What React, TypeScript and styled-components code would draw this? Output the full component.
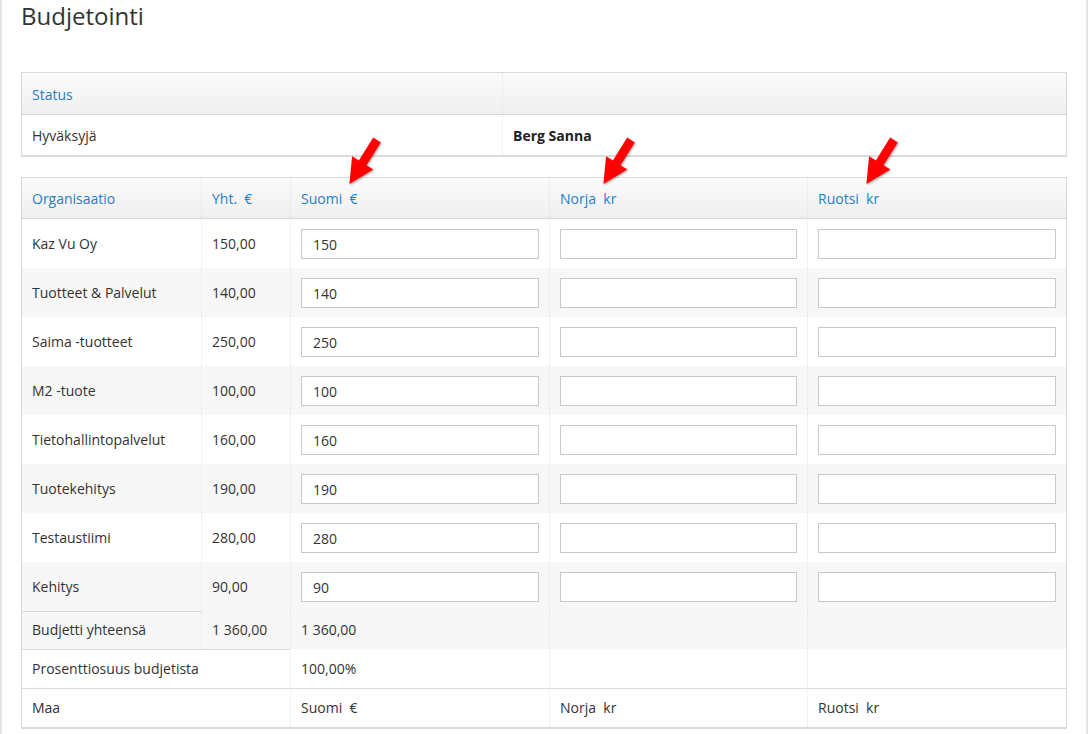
import * as React from "react";
import styled, { createGlobalStyle } from "styled-components";

const GlobalStyle = createGlobalStyle`
  html, body {
    margin: 0;
    padding: 0;
    background: #ffffff;
  }
  body {
    font-family: "Open Sans", "Liberation Sans", sans-serif;
    font-size: 14px;
    color: #333333;
  }
`;

const Panel = styled.div`
  box-sizing: border-box;
  width: 1088px;
  min-height: 734px;
  border-left: 2px solid #e4e4e4;
  border-right: 2px solid #e4e4e4;
  padding: 3px 19px 0 19px;
  position: relative;
`;

const Title = styled.h1`
  margin: 0 0 43px 0;
  font-size: 24px;
  line-height: 26px;
  font-weight: 400;
  color: #333333;
`;

const Table = styled.table`
  width: 1046px;
  table-layout: fixed;
  border-collapse: separate;
  border-spacing: 0;
  border: 1px solid #dadada;
  border-bottom: 2px solid #dcdcdc;
  margin-bottom: 20px;
`;

const HeadCell = styled.th<{ $first?: boolean; $pad?: string }>`
  text-align: left;
  font-weight: 400;
  color: #1f80c4;
  padding: ${(p) => p.$pad ?? "11px 10px 9px"};
  line-height: 20px;
  background: linear-gradient(#fbfbfb, #efefef);
  border-bottom: 1px solid #d6d6d6;
  border-left: ${(p) => (p.$first ? "none" : "1px dotted #e2e2e2")};
  white-space: nowrap;
`;

const Row = styled.tr<{ $shade?: boolean }>`
  background: ${(p) => (p.$shade ? "#f7f7f7" : "#ffffff")};
`;

const Cell = styled.td<{ $first?: boolean; $pad?: string; $rule?: boolean; $bold?: boolean }>`
  padding: ${(p) => p.$pad ?? "9px 10px"};
  line-height: 20px;
  vertical-align: middle;
  border-left: ${(p) => (p.$first ? "none" : "1px dotted #e4e4e4")};
  border-top: ${(p) => (p.$rule ? "1px solid #d9d9d9" : "none")};
  font-weight: ${(p) => (p.$bold ? 700 : 400)};
  color: ${(p) => (p.$bold ? "#222222" : "#333333")};
  white-space: nowrap;
`;

const AmountInput = styled.input`
  box-sizing: border-box;
  display: block;
  width: 100%;
  height: 30px;
  margin: 0;
  padding: 0 11px;
  border: 1px solid #c8c8c8;
  border-radius: 0;
  background: #ffffff;
  font-family: "Open Sans", "Liberation Sans", sans-serif;
  font-size: 14px;
  color: #333333;
  outline: none;
`;

const Arrow = styled.svg<{ $left: number }>`
  position: absolute;
  top: 138px;
  left: ${(p) => p.$left}px;
  width: 50px;
  height: 55px;
  overflow: visible;
  filter: drop-shadow(1px 1px 1px rgba(0, 0, 0, 0.35));
`;

const RedArrow: React.FC<{ left: number }> = ({ left }) => (
  <Arrow $left={left} viewBox="0 0 50 55">
    <g transform="translate(42 2) rotate(122)">
      <path d="M0 -4.5 L27 -4.5 L27 -12.5 L52 0 L27 12.5 L27 4.5 L0 4.5 Z" fill="#ff0000" />
    </g>
  </Arrow>
);

const rows: [string, string, string][] = [
  ["Kaz Vu Oy", "150,00", "150"],
  ["Tuotteet & Palvelut", "140,00", "140"],
  ["Saima -tuotteet", "250,00", "250"],
  ["M2 -tuote", "100,00", "100"],
  ["Tietohallintopalvelut", "160,00", "160"],
  ["Tuotekehitys", "190,00", "190"],
  ["Testaustiimi", "280,00", "280"],
  ["Kehitys", "90,00", "90"],
];

const TALL = "10px 10px 9px 10px";
const STATUS_HEAD = "12px 10px 9px";
const STATUS_ROW = "11px 10px 9px";
const SUM_ROW = "8px 10px 9px";

export default function App() {
  return (
    <>
      <GlobalStyle />
      <Panel>
        <Title>Budjetointi</Title>

        <Table>
          <colgroup>
            <col style={{ width: 480 }} />
            <col />
          </colgroup>
          <thead>
            <tr>
              <HeadCell $first $pad={STATUS_HEAD}>Status</HeadCell>
              <HeadCell $pad={STATUS_HEAD} />
            </tr>
          </thead>
          <tbody>
            <Row>
              <Cell $first $pad={STATUS_ROW}>Hyväksyjä</Cell>
              <Cell $pad={STATUS_ROW} $bold>Berg Sanna</Cell>
            </Row>
          </tbody>
        </Table>

        <Table>
          <colgroup>
            <col style={{ width: 179 }} />
            <col style={{ width: 89 }} />
            <col style={{ width: 259 }} />
            <col style={{ width: 258 }} />
            <col />
          </colgroup>
          <thead>
            <tr>
              <HeadCell $first>Organisaatio</HeadCell>
              <HeadCell>Yht.&nbsp; €</HeadCell>
              <HeadCell>Suomi&nbsp; €</HeadCell>
              <HeadCell>Norja&nbsp; kr</HeadCell>
              <HeadCell>Ruotsi&nbsp; kr</HeadCell>
            </tr>
          </thead>
          <tbody>
            {rows.map(([name, total, fi], i) => (
              <Row key={name} $shade={i % 2 === 1}>
                <Cell $first $pad={TALL}>{name}</Cell>
                <Cell $pad={TALL}>{total}</Cell>
                <Cell $pad={TALL}>
                  <AmountInput defaultValue={fi} />
                </Cell>
                <Cell $pad={TALL}>
                  <AmountInput defaultValue="" />
                </Cell>
                <Cell $pad={TALL}>
                  <AmountInput defaultValue="" />
                </Cell>
              </Row>
            ))}
            <Row $shade>
              <Cell $first $rule $pad={SUM_ROW}>Budjetti yhteensä</Cell>
              <Cell $pad={SUM_ROW}>1 360,00</Cell>
              <Cell $pad={SUM_ROW}>1 360,00</Cell>
              <Cell />
              <Cell />
            </Row>
            <Row>
              <Cell $first colSpan={2} $rule>Prosenttiosuus budjetista</Cell>
              <Cell>100,00%</Cell>
              <Cell />
              <Cell />
            </Row>
            <Row>
              <Cell $first colSpan={2} $rule>Maa</Cell>
              <Cell $rule>Suomi&nbsp; €</Cell>
              <Cell $rule>Norja&nbsp; kr</Cell>
              <Cell $rule>Ruotsi&nbsp; kr</Cell>
            </Row>
          </tbody>
        </Table>

        <RedArrow left={333} />
        <RedArrow left={587} />
        <RedArrow left={850} />
      </Panel>
    </>
  );
}
